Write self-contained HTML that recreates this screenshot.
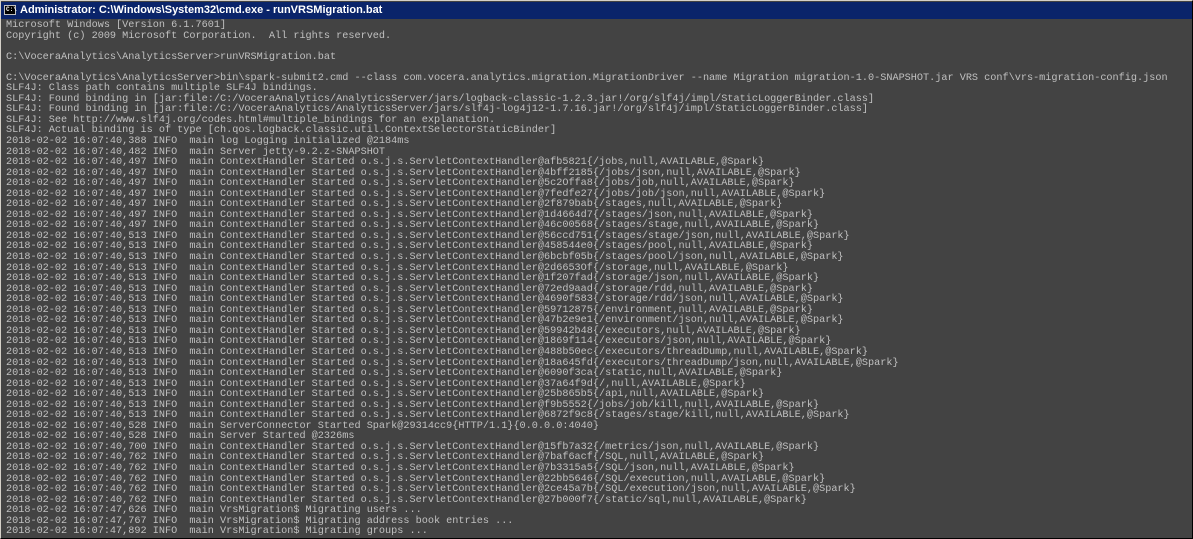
<!DOCTYPE html>
<html><head><style>
html,body{margin:0;padding:0;background:#434343;width:1193px;height:539px;overflow:hidden}
.win{position:absolute;left:0;top:0;width:1191px;height:537px;border:1px solid #000;border-top-color:#d4d0c8;border-left-color:#d4d0c8;background:#434343}
.tb{position:absolute;left:0;top:1px;width:1191px;height:17px;background:#0a246a;color:#fff;font:bold 11px "Liberation Sans",sans-serif;line-height:17px}
.tb span{position:absolute;left:19px;top:0}
.ic{position:absolute;left:3px;top:3px;width:12px;height:10px;background:#000;border:1px solid #c0c0c0;box-sizing:border-box;font:bold 6px "Liberation Mono",monospace;color:#fff;line-height:8px;text-indent:1px}
pre{position:absolute;left:5px;top:20px;margin:0;font:10.2px/10.54px "Liberation Mono",monospace;color:#c0c0c0;white-space:pre}
</style></head><body><div class="win">
<div class="tb"><div class="ic">C:\</div><span>Administrator: C:\Windows\System32\cmd.exe - runVRSMigration.bat</span></div>
<pre>Microsoft Windows [Version 6.1.7601]
Copyright (c) 2009 Microsoft Corporation.  All rights reserved.

C:\VoceraAnalytics\AnalyticsServer>runVRSMigration.bat

C:\VoceraAnalytics\AnalyticsServer>bin\spark-submit2.cmd --class com.vocera.analytics.migration.MigrationDriver --name Migration migration-1.0-SNAPSHOT.jar VRS conf\vrs-migration-config.json
SLF4J: Class path contains multiple SLF4J bindings.
SLF4J: Found binding in [jar:file:/C:/VoceraAnalytics/AnalyticsServer/jars/logback-classic-1.2.3.jar!/org/slf4j/impl/StaticLoggerBinder.class]
SLF4J: Found binding in [jar:file:/C:/VoceraAnalytics/AnalyticsServer/jars/slf4j-log4j12-1.7.16.jar!/org/slf4j/impl/StaticLoggerBinder.class]
SLF4J: See http://www.slf4j.org/codes.html#multiple_bindings for an explanation.
SLF4J: Actual binding is of type [ch.qos.logback.classic.util.ContextSelectorStaticBinder]
2018-02-02 16:07:40,388 INFO  main log Logging initialized @2184ms
2018-02-02 16:07:40,482 INFO  main Server jetty-9.2.z-SNAPSHOT
2018-02-02 16:07:40,497 INFO  main ContextHandler Started o.s.j.s.ServletContextHandler@afb5821{/jobs,null,AVAILABLE,@Spark}
2018-02-02 16:07:40,497 INFO  main ContextHandler Started o.s.j.s.ServletContextHandler@4bff2185{/jobs/json,null,AVAILABLE,@Spark}
2018-02-02 16:07:40,497 INFO  main ContextHandler Started o.s.j.s.ServletContextHandler@5c2Offa8{/jobs/job,null,AVAILABLE,@Spark}
2018-02-02 16:07:40,497 INFO  main ContextHandler Started o.s.j.s.ServletContextHandler@7fedfe27{/jobs/job/json,null,AVAILABLE,@Spark}
2018-02-02 16:07:40,497 INFO  main ContextHandler Started o.s.j.s.ServletContextHandler@2f879bab{/stages,null,AVAILABLE,@Spark}
2018-02-02 16:07:40,497 INFO  main ContextHandler Started o.s.j.s.ServletContextHandler@1d4664d7{/stages/json,null,AVAILABLE,@Spark}
2018-02-02 16:07:40,497 INFO  main ContextHandler Started o.s.j.s.ServletContextHandler@46c00568{/stages/stage,null,AVAILABLE,@Spark}
2018-02-02 16:07:40,513 INFO  main ContextHandler Started o.s.j.s.ServletContextHandler@56ccd751{/stages/stage/json,null,AVAILABLE,@Spark}
2018-02-02 16:07:40,513 INFO  main ContextHandler Started o.s.j.s.ServletContextHandler@458544e0{/stages/pool,null,AVAILABLE,@Spark}
2018-02-02 16:07:40,513 INFO  main ContextHandler Started o.s.j.s.ServletContextHandler@6bcbf05b{/stages/pool/json,null,AVAILABLE,@Spark}
2018-02-02 16:07:40,513 INFO  main ContextHandler Started o.s.j.s.ServletContextHandler@2d6653Of{/storage,null,AVAILABLE,@Spark}
2018-02-02 16:07:40,513 INFO  main ContextHandler Started o.s.j.s.ServletContextHandler@1f207fad{/storage/json,null,AVAILABLE,@Spark}
2018-02-02 16:07:40,513 INFO  main ContextHandler Started o.s.j.s.ServletContextHandler@72ed9aad{/storage/rdd,null,AVAILABLE,@Spark}
2018-02-02 16:07:40,513 INFO  main ContextHandler Started o.s.j.s.ServletContextHandler@4690f583{/storage/rdd/json,null,AVAILABLE,@Spark}
2018-02-02 16:07:40,513 INFO  main ContextHandler Started o.s.j.s.ServletContextHandler@59712875{/environment,null,AVAILABLE,@Spark}
2018-02-02 16:07:40,513 INFO  main ContextHandler Started o.s.j.s.ServletContextHandler@47b2e9e1{/environment/json,null,AVAILABLE,@Spark}
2018-02-02 16:07:40,513 INFO  main ContextHandler Started o.s.j.s.ServletContextHandler@59942b48{/executors,null,AVAILABLE,@Spark}
2018-02-02 16:07:40,513 INFO  main ContextHandler Started o.s.j.s.ServletContextHandler@1869f114{/executors/json,null,AVAILABLE,@Spark}
2018-02-02 16:07:40,513 INFO  main ContextHandler Started o.s.j.s.ServletContextHandler@488b50ec{/executors/threadDump,null,AVAILABLE,@Spark}
2018-02-02 16:07:40,513 INFO  main ContextHandler Started o.s.j.s.ServletContextHandler@18a645fd{/executors/threadDump/json,null,AVAILABLE,@Spark}
2018-02-02 16:07:40,513 INFO  main ContextHandler Started o.s.j.s.ServletContextHandler@6090f3ca{/static,null,AVAILABLE,@Spark}
2018-02-02 16:07:40,513 INFO  main ContextHandler Started o.s.j.s.ServletContextHandler@37a64f9d{/,null,AVAILABLE,@Spark}
2018-02-02 16:07:40,513 INFO  main ContextHandler Started o.s.j.s.ServletContextHandler@25b865b5{/api,null,AVAILABLE,@Spark}
2018-02-02 16:07:40,513 INFO  main ContextHandler Started o.s.j.s.ServletContextHandler@f9b5552{/jobs/job/kill,null,AVAILABLE,@Spark}
2018-02-02 16:07:40,513 INFO  main ContextHandler Started o.s.j.s.ServletContextHandler@6872f9c8{/stages/stage/kill,null,AVAILABLE,@Spark}
2018-02-02 16:07:40,528 INFO  main ServerConnector Started Spark@29314cc9{HTTP/1.1}{0.0.0.0:4040}
2018-02-02 16:07:40,528 INFO  main Server Started @2326ms
2018-02-02 16:07:40,700 INFO  main ContextHandler Started o.s.j.s.ServletContextHandler@15fb7a32{/metrics/json,null,AVAILABLE,@Spark}
2018-02-02 16:07:40,762 INFO  main ContextHandler Started o.s.j.s.ServletContextHandler@7baf6acf{/SQL,null,AVAILABLE,@Spark}
2018-02-02 16:07:40,762 INFO  main ContextHandler Started o.s.j.s.ServletContextHandler@7b3315a5{/SQL/json,null,AVAILABLE,@Spark}
2018-02-02 16:07:40,762 INFO  main ContextHandler Started o.s.j.s.ServletContextHandler@22bb5646{/SQL/execution,null,AVAILABLE,@Spark}
2018-02-02 16:07:40,762 INFO  main ContextHandler Started o.s.j.s.ServletContextHandler@2ce45a7b{/SQL/execution/json,null,AVAILABLE,@Spark}
2018-02-02 16:07:40,762 INFO  main ContextHandler Started o.s.j.s.ServletContextHandler@27b000f7{/static/sql,null,AVAILABLE,@Spark}
2018-02-02 16:07:47,626 INFO  main VrsMigration$ Migrating users ...
2018-02-02 16:07:47,767 INFO  main VrsMigration$ Migrating address book entries ...
2018-02-02 16:07:47,892 INFO  main VrsMigration$ Migrating groups ...</pre>
</div></body></html>
